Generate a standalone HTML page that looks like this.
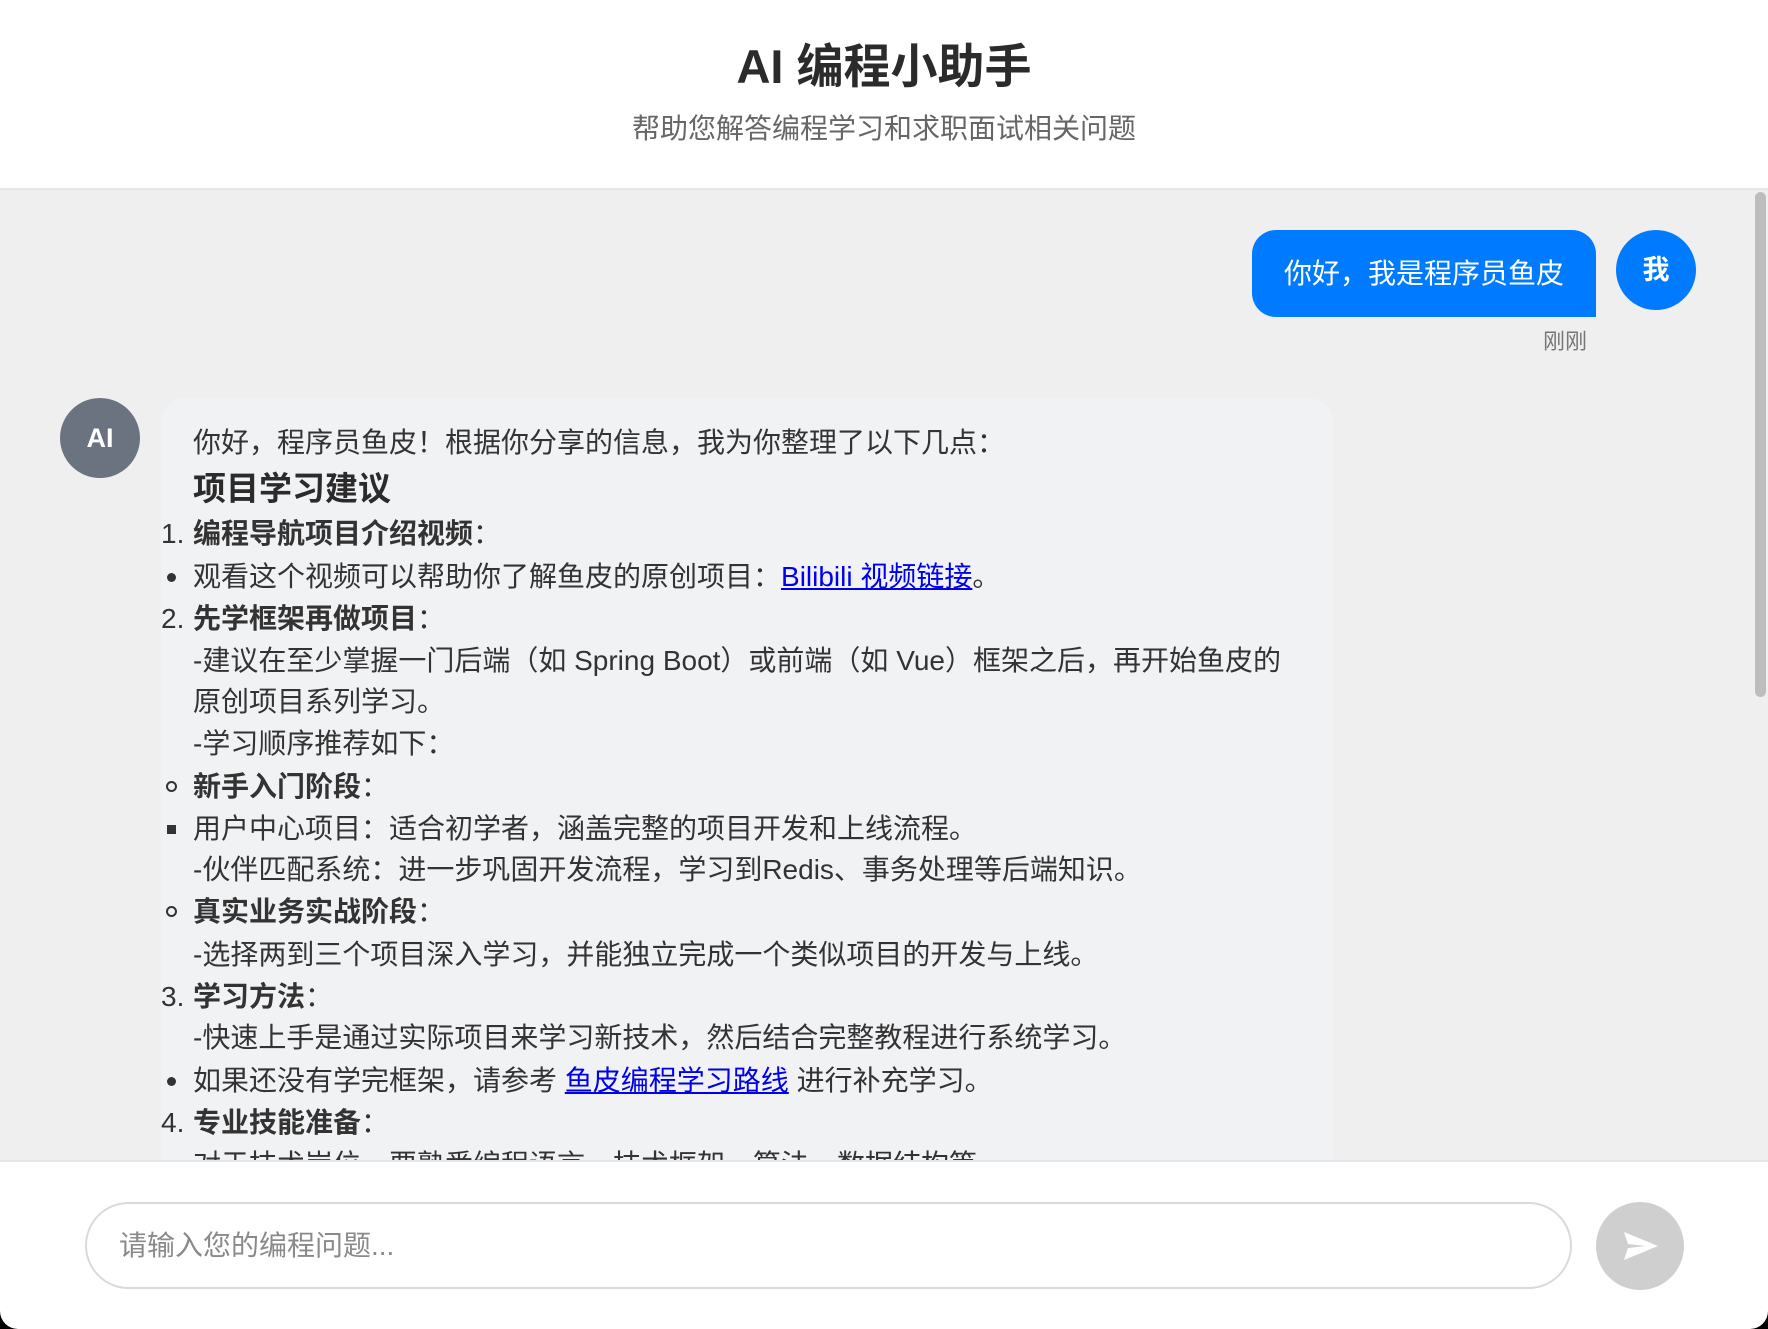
<!DOCTYPE html>
<html><head><meta charset="utf-8"><style>
*{margin:0;padding:0;box-sizing:border-box}
html,body{width:1768px;height:1329px;background:#000;overflow:hidden}
body{font-family:"Liberation Sans","Noto Sans CJK SC",sans-serif;color:#333}
.app{position:absolute;left:0;top:0;width:1768px;height:1329px;background:#fff;border-radius:0 0 18px 18px;overflow:hidden}
.header{position:absolute;left:0;top:0;width:1768px;height:190px;background:#fff;border-bottom:2px solid #e3e6ea}
.title{position:absolute;left:0;width:1768px;top:37px;text-align:center;font-size:47px;font-weight:bold;line-height:60px;color:#2b2b2b}
.sub{position:absolute;left:0;width:1768px;top:109px;text-align:center;font-size:28px;line-height:40px;color:#666}
.chat{position:absolute;left:0;top:190px;width:1768px;height:970px;background:#efefef;overflow:hidden}
.scroll{position:absolute;right:2px;top:2px;width:11px;height:505px;background:#bdbdbd;border-radius:6px}
.ub{position:absolute;left:1252px;top:40px;width:344px;height:87px;background:#007bff;border-radius:24px 24px 0 24px;color:#fff;font-size:28px;line-height:87px;text-align:center}
.ua{position:absolute;left:1616px;top:40px;width:80px;height:80px;border-radius:50%;background:#007bff;color:#fff;font-weight:bold;font-size:27px;line-height:80px;text-align:center}
.time{position:absolute;left:1540px;top:137px;width:47px;font-size:22px;color:#777;text-align:right;line-height:30px}
.aa{position:absolute;left:60px;top:208px;width:80px;height:80px;border-radius:50%;background:#6b7280;color:#fff;font-weight:bold;font-size:27px;line-height:80px;text-align:center}
.ab{position:absolute;left:161px;top:208px;width:1172px;height:770px;background:#f1f2f4;border-radius:24px 24px 0 0}
.l{position:absolute;left:193px;height:42px;line-height:42px;font-size:28px;white-space:nowrap;color:#333}
.n{position:absolute;left:161px;height:42px;line-height:42px;font-size:28px;color:#333}
.b{font-weight:bold}
a{color:#0000ee;text-decoration:underline}
.dot{position:absolute;left:167px;width:9px;height:9px;border-radius:50%;background:#333}
.circ{position:absolute;left:166px;width:11px;height:11px;border-radius:50%;border:2px solid #333}
.sq{position:absolute;left:167px;width:9px;height:9px;background:#333}
.input{position:absolute;left:85px;top:1202px;width:1487px;height:87px;border:2px solid #dadada;border-radius:44px;background:#fff;font-size:28px;line-height:83px;padding-left:32px;color:#8a8a8a}
.send{position:absolute;left:1596px;top:1202px;width:88px;height:88px;border-radius:50%;background:#cfcfcf}
</style></head><body><div class="app">
<div class="header"><div class="title">AI 编程小助手</div><div class="sub">帮助您解答编程学习和求职面试相关问题</div></div>
<div class="chat">
<div class="ub">你好，我是程序员鱼皮</div>
<div class="ua">我</div>
<div class="time">刚刚</div>
<div class="aa">AI</div>
<div class="ab"></div>
<div class="l" style="top:232px">你好，程序员鱼皮！根据你分享的信息，我为你整理了以下几点：</div>
<div class="l b" style="top:278px;font-size:33px;color:#2b2b2b">项目学习建议</div>
<div class="n" style="top:323px">1.</div><div class="l" style="top:323px"><span class="b">编程导航项目介绍视频</span>：</div>
<div class="dot" style="top:383px"></div><div class="l" style="top:366px">观看这个视频可以帮助你了解鱼皮的原创项目：<a>Bilibili 视频链接</a>。</div>
<div class="n" style="top:408px">2.</div><div class="l" style="top:408px"><span class="b">先学框架再做项目</span>：</div>
<div class="l" style="top:450px">-建议在至少掌握一门后端（如 Spring Boot）或前端（如 Vue）框架之后，再开始鱼皮的</div>
<div class="l" style="top:491px">原创项目系列学习。</div>
<div class="l" style="top:533px">-学习顺序推荐如下：</div>
<div class="circ" style="top:591px"></div><div class="l" style="top:576px"><span class="b">新手入门阶段</span>：</div>
<div class="sq" style="top:635px"></div><div class="l" style="top:618px">用户中心项目：适合初学者，涵盖完整的项目开发和上线流程。</div>
<div class="l" style="top:659px">-伙伴匹配系统：进一步巩固开发流程，学习到Redis、事务处理等后端知识。</div>
<div class="circ" style="top:716px"></div><div class="l" style="top:701px"><span class="b">真实业务实战阶段</span>：</div>
<div class="l" style="top:744px">-选择两到三个项目深入学习，并能独立完成一个类似项目的开发与上线。</div>
<div class="n" style="top:786px">3.</div><div class="l" style="top:786px"><span class="b">学习方法</span>：</div>
<div class="l" style="top:827px">-快速上手是通过实际项目来学习新技术，然后结合完整教程进行系统学习。</div>
<div class="dot" style="top:887px"></div><div class="l" style="top:870px">如果还没有学完框架，请参考 <a>鱼皮编程学习路线</a> 进行补充学习。</div>
<div class="n" style="top:912px">4.</div><div class="l" style="top:912px"><span class="b">专业技能准备</span>：</div>
<div class="l" style="top:954px;height:16px;overflow:hidden;line-height:42px">对于技术岗位，要熟悉编程语言、技术框架、算法、数据结构等</div>
<div class="scroll"></div>
</div>
<div style="position:absolute;left:0;top:1160px;width:1768px;height:2px;background:#e3e6ea"></div>
<div class="input">请输入您的编程问题...</div>
<div class="send"><svg width="88" height="88" viewBox="0 0 88 88"><path d="M28 30 L62 44 L28 58 L32 46 L50 44 L32 42 Z" fill="#fff"/></svg></div>
</div></body></html>
